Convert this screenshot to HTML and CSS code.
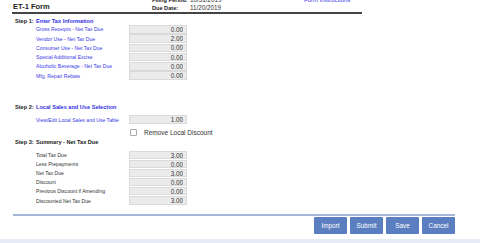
FILE: index.html
```html
<!DOCTYPE html>
<html lang="en">
<head>
  <meta charset="UTF-8">
  <meta name="viewport" content="width=device-width, initial-scale=1.0">
  <title>ET-1 Form</title>
  <link rel="stylesheet" href="styles.css">
</head>
<body>
  <div class="top">
    <h1>ET-1 Form</h1>
    <div class="meta">
      <div><b>Filing Period:</b><span>10/31/2019</span></div>
      <div><b>Due Date:</b><span>11/20/2019</span></div>
    </div>
    <a class="instr" href="#">Form Instructions</a>
  </div>

  <div class="step s1">
    <div class="step-head"><b>Step 1:</b><a href="#">Enter Tax Information</a></div>
    <div class="rows">
      <a href="#">Gross Receipts - Net Tax Due</a><input value="0.00" readonly>
      <a href="#">Vendor Use - Net Tax Due</a><input value="2.00" readonly>
      <a href="#">Consumer Use - Net Tax Due</a><input value="0.00" readonly>
      <a href="#">Special Additional Excise</a><input value="0.00" readonly>
      <a href="#">Alcoholic Beverage - Net Tax Due</a><input value="0.00" readonly>
      <a href="#">Mfg. Repair Rebate</a><input value="0.00" readonly>
    </div>
  </div>

  <div class="step s2">
    <div class="step-head"><b>Step 2:</b><a href="#">Local Sales and Use Selection</a></div>
    <div class="rows">
      <a href="#">View/Edit Local Sales and Use Table</a><input value="1.00" readonly>
    </div>
    <label class="check"><span class="box"></span>Remove Local Discount</label>
  </div>

  <div class="step s3">
    <div class="step-head"><b>Step 3:</b><span>Summary - Net Tax Due</span></div>
    <div class="rows plain">
      <span>Total Tax Due</span><input value="3.00" readonly>
      <span>Less Prepayments</span><input value="0.00" readonly>
      <span>Net Tax Due</span><input value="3.00" readonly>
      <span>Discount</span><input value="0.00" readonly>
      <span>Previous Discount if Amending</span><input value="0.00" readonly>
      <span class="last">Discounted Net Tax Due</span><input class="last" value="3.00" readonly>
    </div>
  </div>

  <div class="actions">
    <button>Import</button>
    <button>Submit</button>
    <button>Save</button>
    <button>Cancel</button>
  </div>
  <div class="band"></div>
</body>
</html>
```

FILE: styles.css
```css
body {
  margin: 0;
  font-family: "Liberation Sans", Arial, sans-serif;
  color: #222;
  background: #fff;
  overflow: hidden;
}
a { color: #3a3ae8; text-decoration: none; }

/* header */
.top {
  display: flex;
  align-items: flex-end;
  margin-left: 12px;
  width: 350px;
  height: 12px;
  border-bottom: 2px solid #444;
  white-space: nowrap;
}
h1 {
  margin: 0 0 1px 1px;
  width: 139px;
  font-size: 7.5px;
  line-height: 8px;
}
.meta {
  flex-shrink: 0;
  width: 152px;
  font-size: 6px;
  line-height: 7px;
  margin-bottom: 0.5px;
}
.meta b { display: inline-block; width: 38px; font-size: 5.6px; }
.meta span { font-size: 6.3px; color: #333; }
.instr {
  align-self: flex-start;
  margin-top: -3px;
  font-size: 6px;
  line-height: 6px;
}

/* steps */
.step { margin-left: 15px; white-space: nowrap; }
.step-head {
  display: flex;
  font-size: 5.6px;
  font-weight: bold;
  line-height: 7px;
}
.step-head b { width: 21px; flex-shrink: 0; }
.step-head a { color: #3030e0; }
.s1 { margin-top: 4px; }
.s2 { margin-top: 24.5px; }
.s3 { margin-top: 2px; }

.rows {
  display: grid;
  grid-template-columns: 93px 58px;
  grid-auto-rows: 8.5px;
  row-gap: 0.8px;
  margin-left: 21px;
  align-items: center;
  font-size: 5.1px;
}
.s2 .rows { grid-auto-rows: 9.5px; margin-top: 3.5px; }
.plain { color: #333; row-gap: 0.5px; margin-top: 4.5px; }
.plain .last { margin-top: 1px; }
.rows input {
  box-sizing: border-box;
  height: 100%;
  width: 58px;
  margin: 0;
  padding: 0 3px 0 0;
  border: 1px solid #dadada;
  background: #ebebeb;
  font: 6.3px "Liberation Sans", Arial, sans-serif;
  color: #333;
  text-align: right;
  outline: none;
}

.check {
  display: flex;
  align-items: center;
  margin: 4px 0 0 115px;
  font-size: 6.5px;
  color: #333;
  line-height: 9px;
}
.check .box {
  box-sizing: border-box;
  width: 7px;
  height: 7px;
  border: 1px solid #aaa;
  border-radius: 1px;
  margin-right: 7px;
  background: #fff;
}

/* footer */
.actions {
  display: flex;
  justify-content: flex-end;
  gap: 3px;
  margin: 9.5px 0 0 13px;
  width: 442px;
  padding-top: 1px;
  border-top: 2px solid #a6b5d8;
}
.actions button {
  width: 33px;
  height: 17px;
  padding: 0;
  border: none;
  border-radius: 1px;
  background: #5a7ec0;
  color: #fff;
  font: 6.4px "Liberation Sans", Arial, sans-serif;
}
.band {
  margin-top: 5px;
  height: 6px;
  background: #e6ecf6;
}
```
